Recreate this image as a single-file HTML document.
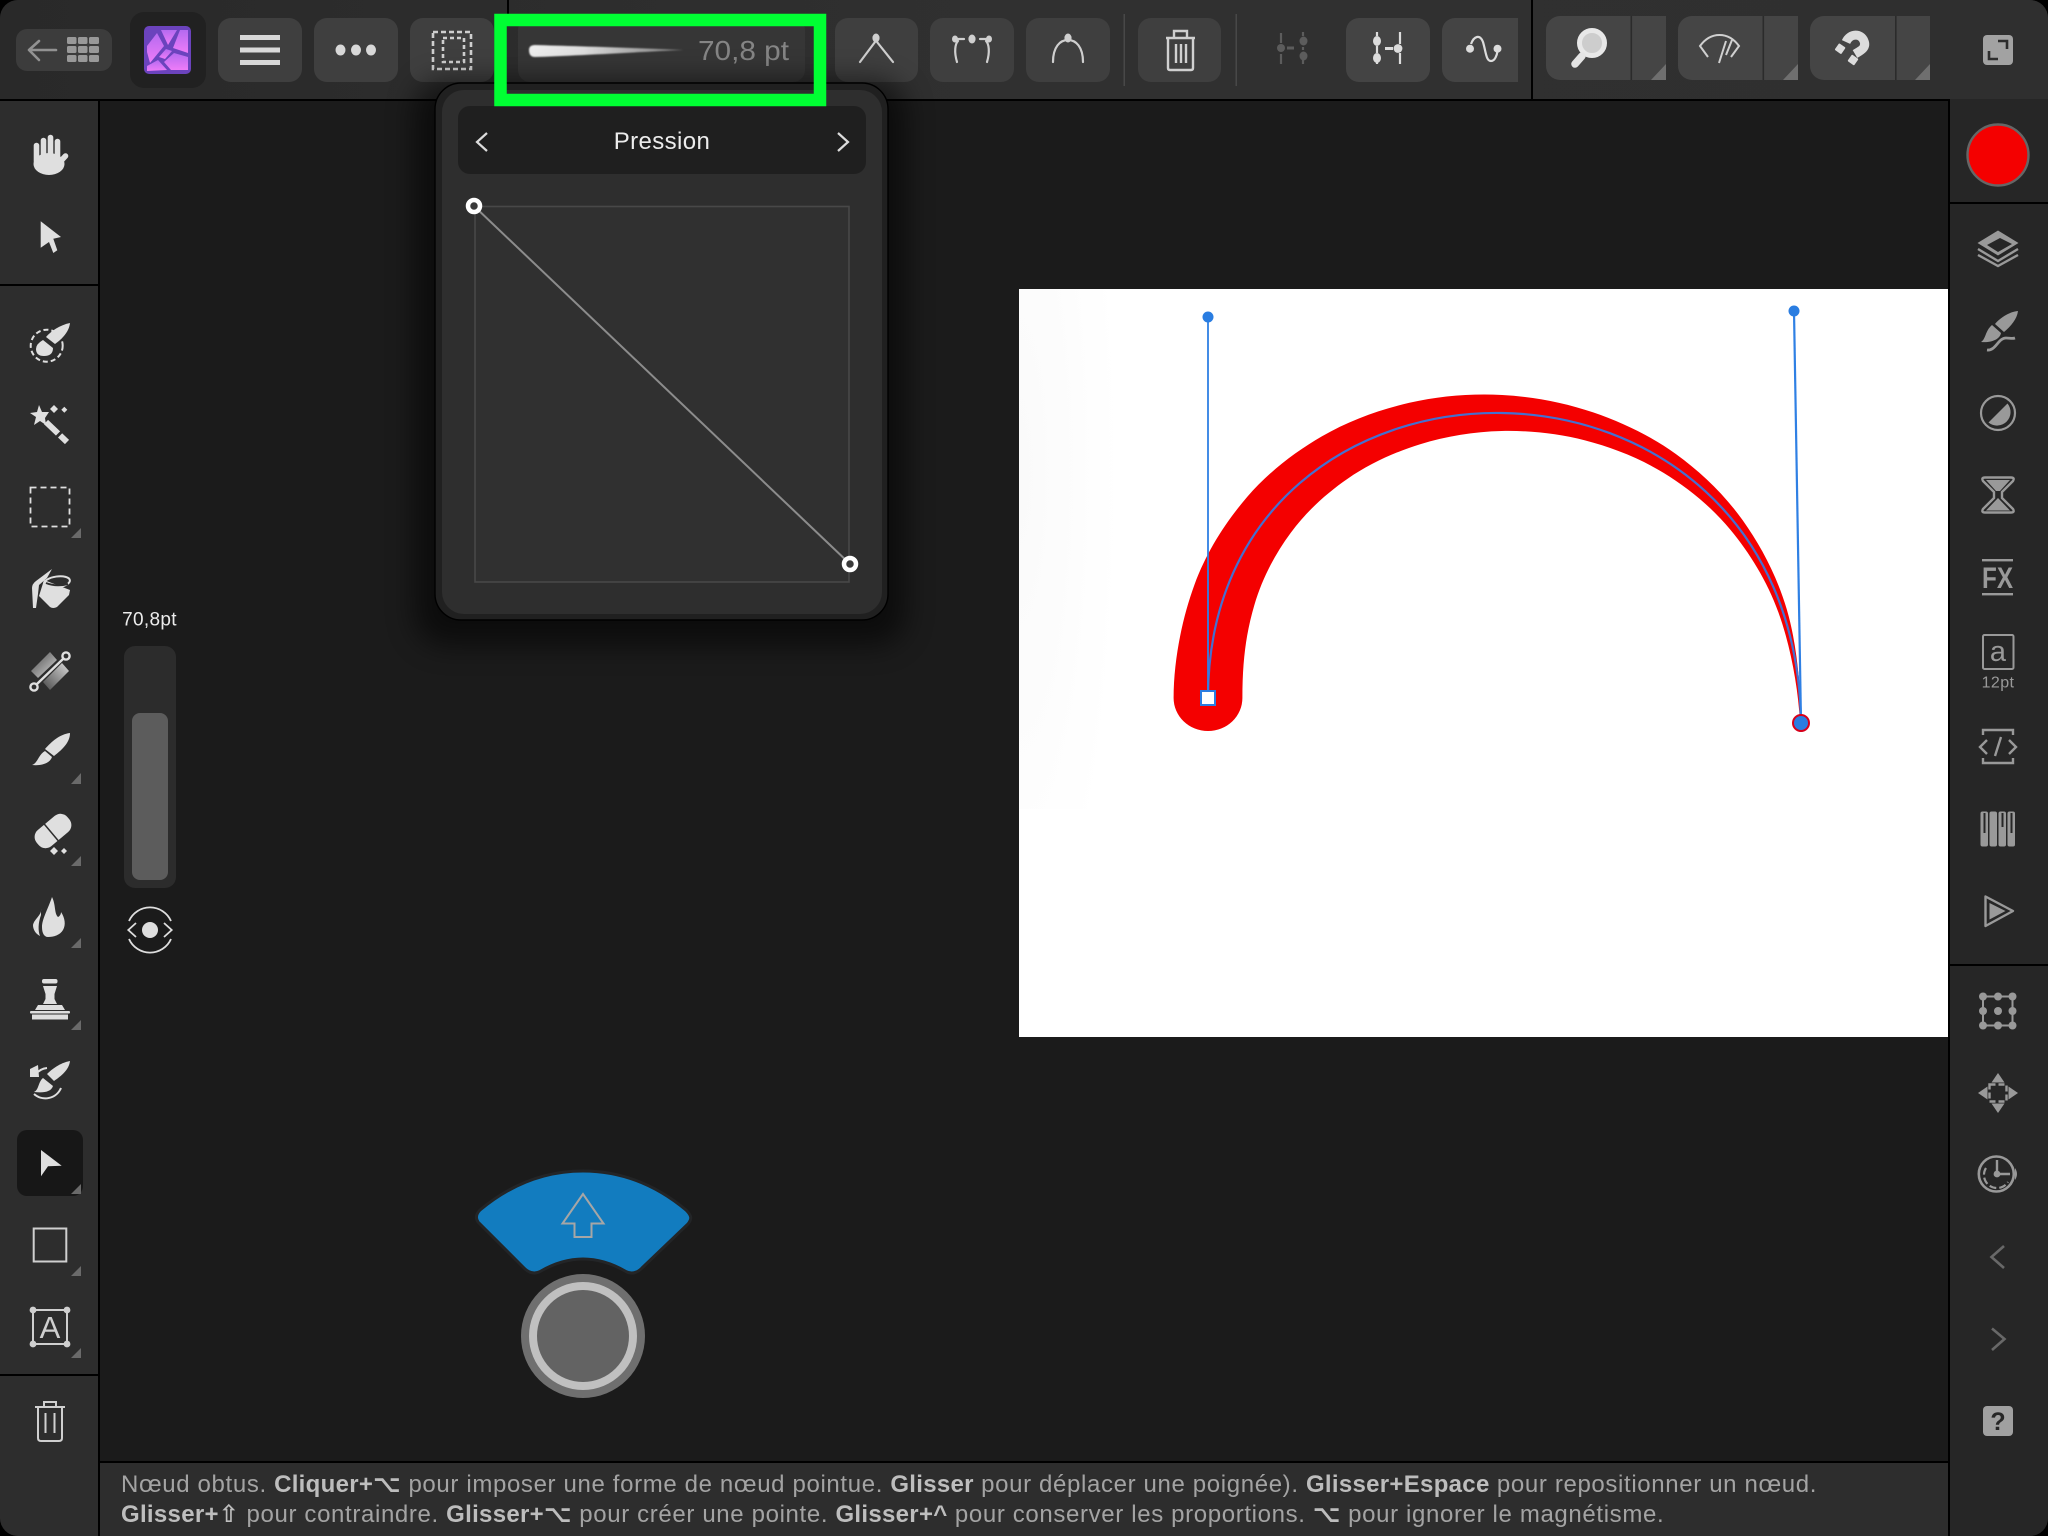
<!DOCTYPE html>
<html lang="fr">
<head>
<meta charset="utf-8">
<title>Affinity Photo</title>
<style>
html,body{margin:0;padding:0;background:#000;width:2048px;height:1536px;overflow:hidden}
svg{display:block;position:absolute;left:0;top:0;border-radius:18px}
text{font-family:"Liberation Sans","DejaVu Sans",sans-serif}
#status{position:absolute;left:121px;top:1470px;width:1810px;font:24px/29.5px "Liberation Sans","DejaVu Sans",sans-serif;color:#a3a3a3;white-space:nowrap;letter-spacing:.64px}
#status b{color:#bdbdbd;font-weight:bold;letter-spacing:.3px}
</style>
</head>
<body>
<svg width="2048" height="1536" viewBox="0 0 2048 1536" xmlns="http://www.w3.org/2000/svg">
<defs>
<linearGradient id="tb" x1="0" x2="1" y1="0" y2="0"><stop offset="0" stop-color="#292929"/><stop offset=".5" stop-color="#303030"/><stop offset="1" stop-color="#2f2f2f"/></linearGradient>
<linearGradient id="logo" x1="0" x2="0" y1="0" y2="1"><stop offset="0" stop-color="#b56af0"/><stop offset="1" stop-color="#ee7cf8"/></linearGradient>
<linearGradient id="stk" x1="0" x2="1" y1="0" y2="0"><stop offset="0" stop-color="#eee"/><stop offset=".35" stop-color="#ddd"/><stop offset="1" stop-color="#777"/></linearGradient>
<linearGradient id="g1" x1="0" x2="1" y1="0" y2="1"><stop offset="0" stop-color="#4a4a4a"/><stop offset="1" stop-color="#d8d8d8"/></linearGradient>
<linearGradient id="g2" x1="0" x2="1" y1="1" y2="0"><stop offset="0" stop-color="#4a4a4a"/><stop offset="1" stop-color="#d8d8d8"/></linearGradient>
<radialGradient id="doc" cx="0" cy=".35" r="1"><stop offset="0" stop-color="#fafafa"/><stop offset="1" stop-color="#fff"/></radialGradient>
<filter id="bl" x="-20%" y="-20%" width="140%" height="140%"><feGaussianBlur stdDeviation="14"/></filter>
<filter id="bl2"><feGaussianBlur stdDeviation=".7"/></filter>
</defs>

<rect width="2048" height="1536" fill="#1b1b1b"/>

<!-- document -->
<rect x="1019" y="289" width="929" height="748" fill="#fff"/>
<rect x="1019" y="289" width="100" height="520" fill="url(#doc)"/>

<!-- stroke -->
<path fill="#f40000" d="M1173.6,698 C1173.6,660 1182.2,618.1 1194.5,584.6 C1206.8,551.1 1226,521.6 1247.2,496.9 C1268.4,472.2 1294.8,452.1 1321.8,436.4 C1348.8,420.7 1379.3,409.7 1409.4,402.8 C1439.5,395.9 1471.6,393.4 1502.2,395 C1532.8,396.6 1564.2,402.5 1593.2,412.4 C1622.2,422.3 1651.1,436.1 1676,454.1 C1700.9,472.1 1724.2,494.3 1742.7,520.3 C1761.2,546.3 1777,576.2 1786.9,609.8 C1796.8,643.4 1800,684 1802,722 L1800,722 C1798,686 1790.1,644.6 1778.5,612.6 C1766.9,580.6 1749.7,553.2 1730.5,529.9 C1711.3,506.6 1687.9,487.8 1663.6,472.9 C1639.3,458 1612,447.4 1585,440.4 C1558,433.4 1529.1,430.4 1501.6,431 C1474.1,431.6 1445.8,436.3 1420.2,444.2 C1394.6,452.1 1369.4,463.8 1347.8,478.6 C1326.2,493.4 1306.4,511.6 1290.8,532.7 C1275.2,553.8 1262.4,577.6 1254.3,605.2 C1246.2,632.8 1242.4,660 1242.4,698 A34.4,33 0 0 1 1173.6,698 Z"/>
<path fill="none" stroke="#4470d0" stroke-width="2.2" d="M1208,698 C1208,317 1794,311 1801,722"/>
<line x1="1208" y1="698" x2="1208" y2="317" stroke="#2f80e4" stroke-width="1.8"/>
<line x1="1794" y1="311" x2="1801" y2="722" stroke="#2f80e4" stroke-width="2.2"/>
<circle cx="1208" cy="317" r="5.5" fill="#2a7de1"/>
<circle cx="1794" cy="311" r="5.5" fill="#2a7de1"/>
<rect x="1201" y="691" width="14" height="14" fill="#fff" stroke="#2a7de1" stroke-width="2"/>
<circle cx="1801" cy="727" r="5" fill="#2a7de1"/>
<circle cx="1801" cy="723" r="8" fill="#2a7de1" stroke="#d8001a" stroke-width="2"/>

<!-- top bar -->
<rect width="2048" height="99" fill="url(#tb)"/>
<rect y="99" width="2048" height="2" fill="#000"/>
<rect x="507" y="0" width="2" height="20" fill="#000"/>
<rect x="1531" y="0" width="2" height="99" fill="#000"/>

<!-- back -->
<rect x="16" y="29" width="96" height="42" rx="11" fill="#3c3c3c"/>
<path d="M56,50 H30 M39,41 L29,50 L39,60" fill="none" stroke="#929292" stroke-width="2.6" stroke-linecap="round" stroke-linejoin="round"/>
<g fill="#999">
<rect x="67" y="37" width="9.5" height="7" rx="1.5"/><rect x="78" y="37" width="9.5" height="7" rx="1.5"/><rect x="89" y="37" width="10" height="7" rx="1.5"/>
<rect x="67" y="46" width="9.5" height="7" rx="1.5"/><rect x="78" y="46" width="9.5" height="7" rx="1.5"/><rect x="89" y="46" width="10" height="7" rx="1.5"/>
<rect x="67" y="55" width="9.5" height="7" rx="1.5"/><rect x="78" y="55" width="9.5" height="7" rx="1.5"/><rect x="89" y="55" width="10" height="7" rx="1.5"/>
</g>

<!-- logo -->
<rect x="130" y="12" width="76" height="76" rx="14" fill="#212121"/>
<rect x="144" y="26" width="47" height="48" rx="5" fill="#6b43bd"/>
<g fill="url(#logo)">
<polygon points="161,30 177,30 168,45"/>
<polygon points="180,30 188,30 188,53 173,48"/>
<polygon points="157,33 164,46 150,63 147,52 147,46"/>
<polygon points="166,49 172,51 165,59 159,57"/>
<polygon points="174,53 188,57 188,70 171,70 164,62"/>
<polygon points="147,66 158,60 167,70 147,71"/>
</g>

<!-- buttons -->
<g fill="#3f3f3f">
<rect x="218" y="18" width="84" height="64" rx="13"/>
<rect x="314" y="18" width="84" height="64" rx="13"/>
<rect x="410" y="18" width="84" height="64" rx="13"/>
<rect x="835" y="18" width="83" height="64" rx="13"/>
<rect x="930" y="18" width="84" height="64" rx="13"/>
<rect x="1026" y="18" width="84" height="64" rx="13"/>
<rect x="1138" y="18" width="83" height="64" rx="13"/>
<rect x="1346" y="18" width="84" height="64" rx="13" fill="#444"/>
<path d="M1455,18 H1518 V82 H1455 A13,13 0 0 1 1442,69 V31 A13,13 0 0 1 1455,18Z" fill="#444"/>
</g>
<g fill="#d8d8d8"><rect x="240" y="35" width="40" height="5"/><rect x="240" y="47.5" width="40" height="5"/><rect x="240" y="60" width="40" height="5"/></g>
<g fill="#d8d8d8"><ellipse cx="340.5" cy="50" rx="5" ry="5.5"/><ellipse cx="356" cy="50" rx="5" ry="5.5"/><ellipse cx="371" cy="50" rx="5" ry="5.5"/></g>
<g fill="none" stroke="#cfcfcf" stroke-width="2.6"><rect x="433" y="32" width="38" height="37" stroke-dasharray="5 3"/><rect x="443" y="38" width="21" height="24" stroke-dasharray="4 3"/></g>

<!-- brush control -->
<rect x="518" y="18" width="287" height="64" rx="12" fill="#363636"/>
<path d="M529,50 Q529,45 535,45 C570,46 640,48 684,50 C640,52 570,56 535,57 Q529,57 529,50Z" fill="url(#stk)" filter="url(#bl2)"/>
<text x="698" y="60" font-size="28" fill="#858585" textLength="91" lengthAdjust="spacingAndGlyphs">70,8 pt</text>

<!-- node type icons -->
<g fill="none" stroke="#cfcfcf" stroke-width="2.2" stroke-linecap="round">
<path d="M875,42 L860,62 M877,42 L893,62"/>
<path d="M957,62 C954,52 955,44 958,41 M987,62 C990,52 989,44 986,41 M957,39 H964 M980,39 H987"/>
<path d="M1053,62 C1053,47 1060,40 1068,40 C1076,40 1083,47 1083,62"/>
</g>
<g fill="#cfcfcf">
<ellipse cx="876" cy="38" rx="3.6" ry="4.5"/>
<ellipse cx="972" cy="39" rx="3.6" ry="4.5"/><ellipse cx="955" cy="39" rx="3" ry="3.5"/><ellipse cx="989" cy="39" rx="3" ry="3.5"/>
<ellipse cx="1068" cy="38" rx="3.6" ry="4.5"/>
</g>

<rect x="1123.5" y="14" width="1.5" height="72" fill="#484848"/>
<rect x="1235.5" y="14" width="1.5" height="72" fill="#484848"/>

<!-- top trash -->
<g fill="none" stroke="#d0d0d0" stroke-width="2.4">
<path d="M1166,38 H1195 M1174,37 V31 H1187 V37"/>
<path d="M1168,38 V68 Q1168,70 1170,70 H1191 Q1193,70 1193,68 V38"/>
<path d="M1176,44 V63 M1181,44 V63 M1186,44 V63"/>
</g>

<!-- sliders faded -->
<g fill="none" stroke="#5c5c5c" stroke-width="2.2">
<path d="M1281,33 V43 M1281,54 V64 M1303,32 V36 M1303,47 V50 M1303,60 V64"/>
<path d="M1287,48 H1294" stroke-width="3"/>
</g>
<g fill="#5c5c5c"><circle cx="1281" cy="48" r="4"/><ellipse cx="1303.5" cy="41" rx="4" ry="4.5"/><ellipse cx="1303.5" cy="56" rx="4" ry="4.5"/></g>
<!-- sliders active -->
<g fill="none" stroke="#dcdcdc" stroke-width="2.2">
<path d="M1377,32 V36 M1377,46 V53 M1377,62 V64 M1400,32 V44 M1400,53 V64"/>
<path d="M1385,48.5 H1393" stroke-width="3"/>
</g>
<g fill="#dcdcdc"><ellipse cx="1377" cy="41" rx="4" ry="5"/><ellipse cx="1377" cy="58" rx="4" ry="5"/><circle cx="1398" cy="48.5" r="4.4"/></g>
<!-- curve -->
<path d="M1471,44 C1474,36 1480,34 1483,42 C1486,52 1486,61 1491,61 C1495,61 1497,55 1497.5,51" fill="none" stroke="#dcdcdc" stroke-width="2.2"/>
<circle cx="1470" cy="48.7" r="4" fill="#dcdcdc"/><circle cx="1497.5" cy="48.7" r="4" fill="#dcdcdc"/>

<!-- split buttons -->
<g>
<path d="M1560,16 H1666 V80 H1560 A14,14 0 0 1 1546,66 V30 A14,14 0 0 1 1560,16Z" fill="#454545"/>
<path d="M1692,16 H1798 V80 H1692 A14,14 0 0 1 1678,66 V30 A14,14 0 0 1 1692,16Z" fill="#454545"/>
<path d="M1824,16 H1930 V80 H1824 A14,14 0 0 1 1810,66 V30 A14,14 0 0 1 1824,16Z" fill="#454545"/>
<rect x="1630.5" y="16" width="1.6" height="64" fill="#2b2b2b"/>
<rect x="1762.5" y="16" width="1.6" height="64" fill="#2b2b2b"/>
<rect x="1895" y="16" width="1.6" height="64" fill="#2b2b2b"/>
<g fill="#6f6f6f"><polygon points="1666,64 1666,80 1651,80"/><polygon points="1798,64 1798,80 1783,80"/><polygon points="1930,64 1930,80 1915,80"/></g>
</g>
<!-- magnifier -->
<circle cx="1592" cy="43" r="12.5" fill="#cdcdcd" stroke="#e8e8e8" stroke-width="5"/>
<path d="M1582,56 L1575,64" stroke="#e4e4e4" stroke-width="7.5" stroke-linecap="round"/>
<!-- wiper -->
<path d="M1708,57 L1700,46 Q1708,35 1719.5,35 Q1731,35 1739,46 L1731,57" fill="none" stroke="#d0d0d0" stroke-width="2"/>
<path d="M1719,63 L1726,41 M1726,55 L1732,40" fill="none" stroke="#d0d0d0" stroke-width="2"/>
<!-- magnet -->
<path d="M1846,42 C1850,33 1861,33 1864,41 C1867,48 1860,51 1855,54" fill="none" stroke="#dcdcdc" stroke-width="9"/>
<rect x="1836.5" y="44.5" width="8" height="8" rx="1" transform="rotate(35 1840 48)" fill="#dcdcdc"/>
<rect x="1849" y="56" width="8" height="8" rx="1" transform="rotate(35 1853 60)" fill="#dcdcdc"/>
<!-- expand -->
<rect x="1983" y="35" width="30" height="30" rx="4" fill="#a2a2a2"/>
<path d="M1998,41 H2007 V49 M1989,51 V59 H1998" fill="none" stroke="#2d2d2d" stroke-width="2.6"/>

<!-- left panel -->
<rect x="0" y="101" width="98" height="1435" fill="#2d2d2d"/>
<rect x="98" y="99" width="2" height="1437" fill="#000"/>
<rect x="0" y="284" width="98" height="2" fill="#000"/>
<rect x="0" y="1374" width="98" height="2" fill="#000"/>

<g fill="#dfdfdf" stroke="none">
<!-- hand -->
<g transform="translate(50,155)">
<g stroke="#dfdfdf" stroke-width="5.6" stroke-linecap="round" fill="none"><path d="M-13.5,6 V-9.5"/><path d="M-6.5,4 V-14.5"/><path d="M0.500,4 V-17.5"/><path d="M7.500,4 V-13.500"/><path d="M9,8 L15.500,1"/></g>
<ellipse cx="-1" cy="9" rx="15.500" ry="11"/>
</g>
<!-- arrow -->
<polygon transform="translate(50,237)" points="-9.3,-15.7 11,0 3.3,1.7 7.3,13.3 3.3,16 -1,5 -9.3,10.7"/>
<!-- selection brush -->
<g transform="translate(50,343)">
<circle cx="-3.3" cy="2.7" r="16" fill="none" stroke="#dfdfdf" stroke-width="2" stroke-dasharray="5 3"/>
<path d="M20,-20 C10,-18 1,-12 -4,-6 L5,1 C12,-4 19,-11 20,-20Z"/>
<path d="M-7,-3 L3,5 Q3,13 -6,13 Q-14,13 -14,6 Q-14,1 -7,-3Z"/>
</g>
<!-- wand -->
<g transform="translate(50,425)">
<polygon points="-11,-20 -8,-13 -1,-13 -5,-7 -4,-0 -10,-4 -16,0 -14,-8 -20,-12 -13,-13"/>
<polygon points="4,-20 8,-16 4,-12 0,-16"/><polygon points="14.3,-18.3 17.3,-15.3 14.3,-12.3 11.3,-15.3"/>
<path d="M-4,-3 L17,17" stroke="#dfdfdf" stroke-width="6"/>
<path d="M8,8.5 L10,10.500" stroke="#2d2d2d" stroke-width="8"/>
</g>
<!-- marquee -->
<rect x="30.5" y="487.500" width="39" height="39" fill="none" stroke="#dfdfdf" stroke-width="1.8" stroke-dasharray="6 4"/>
<!-- fill -->
<g transform="translate(50,588)">
<path d="M2,-19 L-14,-7 Q-18,-4 -18,0 L-17,20 L-14,20 L-12,6 L-11,-3 L-3,-10 Z"/>
<path d="M-6,-8 L20,2 L19,7 L7,19 Q3,21 0,19 L-11,8 Z"/>
<ellipse cx="7" cy="-6" rx="13" ry="5.500" transform="rotate(-8 7 -6)" fill="none" stroke="#dfdfdf" stroke-width="2"/>
<path d="M-4,-5 Q6,-1 18,-4" fill="none" stroke="#2d2d2d" stroke-width="2"/>
</g>
<!-- gradient -->
<g transform="translate(50,671)">
<polygon points="-19,0 0,-19 7,-11 -12,7" fill="url(#g1)"/>
<polygon points="-7,11 12,-8 19,0 0,19" fill="url(#g2)"/>
<path d="M-13,13 L13,-12" stroke="#dfdfdf" stroke-width="2.400"/>
<circle cx="-16" cy="16" r="3.600" fill="#2d2d2d" stroke="#dfdfdf" stroke-width="2.400"/>
<circle cx="16" cy="-15" r="3.600" fill="#2d2d2d" stroke="#dfdfdf" stroke-width="2.400"/>
</g>
<!-- brush -->
<g transform="translate(50,750)">
<path d="M20,-17 C10,-16 1,-8 -5,-1 L4,6 C13,-1 20,-8 20,-17Z"/>
<path d="M-5,1 L2,7 C0,13 -8,16 -18,15 C-12,13 -12,5 -5,1Z"/>
</g>
<!-- heal -->
<g transform="translate(50,832)">
<g transform="translate(3,-1) rotate(-40)"><rect x="-20" y="-10.500" width="40" height="21" rx="9"/><rect x="-3" y="-11" width="1.500" height="22" fill="#2d2d2d"/></g>
<polygon points="4,15 8,19 4,23 0,19"/><polygon points="14,16 17,19 14,22 11,19"/>
</g>
<!-- burn -->
<g transform="translate(50,917)">
<path d="M2,-20 C6,-12 4,-4 8,0 C10,-1 11,-3 11,-5 C15,1 16,8 13,13 C10,18 4,20 -2,20 C-6,20 -8,16 -8,10 C-8,2 -2,-8 2,-20Z"/>
<path d="M-9,-8 C-8,-2 -16,2 -17,8 C-17,13 -14,17 -10,19 C-12,14 -12,6 -9,-2Z"/>
</g>
<!-- stamp -->
<g transform="translate(50,999)">
<rect x="-8" y="-20" width="15.500" height="4.500" rx="2"/>
<path d="M-7,-13 H7 L4.500,-5 L4.500,0 L7,5 H-7 L-4.500,0 L-4.500,-5Z"/>
<path d="M-12,6 H12 L15,11 H-15Z"/>
<rect x="-20" y="12" width="40" height="2.500" rx="1"/>
<rect x="-18" y="15.500" width="36" height="5"/>
</g>
<!-- undo brush -->
<g transform="translate(50,1080)">
<path d="M20,-19 C10,-17 2,-11 -3,-6 L4,1 C11,-4 19,-10 20,-19Z"/>
<path d="M-7,-2 L3,6 C1,12 -6,13 -16,12 C-11,10 -12,2 -7,-2Z"/>
<path d="M-14,-6 A16,16 0 0 1 -3,-12 M11,8 A17,17 0 0 1 -16,14" fill="none" stroke="#dfdfdf" stroke-width="2"/>
<polygon points="-20,-11 -12,-15 -11,-3 -20,-3"/>
</g>
</g>

<!-- selected tool -->
<rect x="17" y="1130" width="66" height="66" rx="10" fill="#171717"/>
<polygon transform="translate(50,1163)" points="-9,-13 11.700,2.700 -2,3.300 -9,13.300" fill="#dfdfdf"/>
<rect x="33.700" y="1228.500" width="32.600" height="33" fill="none" stroke="#cfcfcf" stroke-width="2"/>
<g>
<rect x="33" y="1310" width="34" height="34" fill="none" stroke="#cfcfcf" stroke-width="2"/>
<g fill="#cfcfcf"><circle cx="33" cy="1310" r="3.400"/><circle cx="67" cy="1310" r="3.400"/><circle cx="33" cy="1344" r="3.400"/><circle cx="67" cy="1344" r="3.400"/></g>
<text x="50" y="1338" font-size="31" fill="#cfcfcf" text-anchor="middle">A</text>
</g>
<!-- left trash -->
<g fill="none" stroke="#cfcfcf" stroke-width="2">
<path d="M35,1407 H65 M44,1406 V1402 H56 V1406"/>
<path d="M38,1407 V1438 Q38,1441 41,1441 H59 Q62,1441 62,1438 V1407"/>
<path d="M45.500,1413 V1433 M54.500,1413 V1433"/>
</g>
<!-- corner triangles -->
<g fill="#6a6a6a">
<polygon points="81,528 81,538 71,538"/>
<polygon points="81,773 81,784 71,784"/>
<polygon points="81,856 81,866 71,866"/>
<polygon points="81,938 81,948 71,948"/>
<polygon points="81,1020 81,1030 71,1030"/>
<polygon points="81,1184 81,1194 71,1194"/>
<polygon points="81,1266 81,1276 71,1276"/>
<polygon points="81,1348 81,1358 71,1358"/>
</g>

<!-- size slider -->
<text x="149.500" y="625.500" font-size="19" letter-spacing=".3" fill="#ececec" text-anchor="middle">70,8pt</text>
<rect x="124" y="646" width="52" height="242" rx="11" fill="#2c2c2c"/>
<rect x="132" y="713" width="36" height="167" rx="8" fill="#5c5c5c"/>
<g transform="translate(150,930)" fill="none" stroke="#dedede" stroke-width="1.800">
<circle r="8" fill="#dedede" stroke="none"/>
<path d="M-21,-9 A23,23 0 0 1 21,-9 M-21,9 A23,23 0 0 0 21,9 M-14,-7 L-21.700,0 L-14,7 M14,-7 L21.700,0 L14,7"/>
</g>

<!-- popup -->
<rect x="415" y="80" width="490" height="565" rx="30" fill="#000" opacity=".55" filter="url(#bl)"/>
<rect x="435" y="83" width="453" height="537" rx="26" fill="#202020" stroke="#000" stroke-width="1.400"/>
<rect x="442" y="90" width="440" height="524" rx="22" fill="#2e2e2e"/>
<rect x="458" y="106" width="408" height="68" rx="12" fill="#1f1f1f"/>
<text x="662" y="149" font-size="24" letter-spacing=".4" fill="#ececec" text-anchor="middle">Pression</text>
<path d="M487,133 L477,142 L487,151 M838,133 L848,142 L838,151" fill="none" stroke="#dcdcdc" stroke-width="2.200"/>
<rect x="475" y="206.500" width="374" height="375.500" fill="#303030" stroke="#484848" stroke-width="1.600"/>
<line x1="474" y1="206" x2="850" y2="564" stroke="#8c8c8c" stroke-width="2"/>
<circle cx="474" cy="206" r="6" fill="#3a3a3a" stroke="#fff" stroke-width="4.500"/>
<circle cx="850" cy="564" r="6" fill="#3a3a3a" stroke="#fff" stroke-width="4.500"/>

<!-- green highlight -->
<rect x="500.500" y="20" width="319.500" height="80" fill="none" stroke="#00ff33" stroke-width="12.500"/>

<!-- joystick -->
<path d="M478,1222 Q474,1216 480,1210 C510,1185 545,1171 583,1171 C621,1171 656,1185 686,1210 C692,1216 692,1219 688,1224 L642,1268 C636,1274 630,1274 625,1271 C611,1263 598,1259 583,1259 C568,1259 555,1263 541,1271 C536,1274 530,1274 524,1268 Z" fill="#127cbf" stroke="#232527" stroke-width="3"/>
<path d="M583,1194 L562.500,1223.500 H574.500 V1237 H591.500 V1223.500 H603.500 Z" fill="none" stroke="#a6a6a6" stroke-width="2"/>
<circle cx="583" cy="1336" r="62" fill="#6f6f6f"/>
<circle cx="583" cy="1336" r="54" fill="#c0c0c0"/>
<circle cx="583" cy="1336" r="46" fill="#636363"/>

<!-- right panel -->
<rect x="1950" y="99" width="98" height="1437" fill="#262626"/>
<rect x="1948" y="99" width="2" height="1437" fill="#000"/>
<rect x="1950" y="202" width="98" height="2" fill="#000"/>
<rect x="1950" y="964" width="98" height="2" fill="#000"/>
<circle cx="1998" cy="155" r="30.500" fill="#f40000" stroke="#666" stroke-width="2.400"/>

<g fill="#999" stroke="none">
<!-- layers -->
<g transform="translate(1998,248)">
<polygon points="0,-17.500 20.500,-5 0,7.500 -20.500,-5"/>
<polygon points="2,-10 14,-4 0,4 -11,-3" fill="#262626"/>
<path d="M-20,1 L0,13 L20,1 M-20,7 L0,18 L20,7" fill="none" stroke="#999" stroke-width="2.400"/>
</g>
<!-- brush 2 -->
<g transform="translate(1998,330)">
<path d="M20,-19 C10,-18 1,-11 -3,-6 L6,2 C13,-4 19,-11 20,-19Z"/>
<path d="M-6,-5 L3,3 C2,9 -6,13 -17,12 C-12,9 -13,1 -6,-5Z"/>
<path d="M-11,20 C-2,21 0,8 8,8 C12,8 14,9 17,8" fill="none" stroke="#999" stroke-width="2.800"/>
</g>
<!-- adjustment -->
<g transform="translate(1998,413)">
<circle r="17" fill="none" stroke="#999" stroke-width="2.200"/>
<path d="M9.500,-9.500 A13.500,13.500 0 0 1 -9.500,9.500Z"/>
</g>
<!-- hourglass -->
<g transform="translate(1998,495)">
<path d="M-13,-17.500 H13 Q17,-17.500 15,-14 L4,-3 V3 L15,14 Q17,17.500 13,17.500 H-13 Q-17,17.500 -15,14 L-4,3 V-3 L-15,-14 Q-17,-17.500 -13,-17.500Z" fill="none" stroke="#999" stroke-width="2.400"/>
<polygon points="-12,-15 12,-15 2,-4 -2,-4"/>
<polygon points="0,3 12,15.500 -12,15.500"/>
</g>
<!-- FX -->
<rect x="1982" y="559" width="31" height="2.400"/>
<rect x="1982" y="593" width="31" height="2.400"/>
<text x="1982" y="588" font-size="30" font-weight="bold" textLength="31" lengthAdjust="spacingAndGlyphs">FX</text>
<!-- a box -->
<rect x="1983" y="635" width="30.500" height="34" rx="1.500" fill="none" stroke="#999" stroke-width="2"/>
<text x="1998" y="661" font-size="29" text-anchor="middle">a</text>
<text x="1998" y="687.500" font-size="16" text-anchor="middle" letter-spacing=".4">12pt</text>
<!-- code -->
<g transform="translate(1998,747)" fill="none" stroke="#999" stroke-width="2.400">
<path d="M-15,-12 V-17 H15 V-12 M-15,11 V16 H15 V11"/>
<path d="M-11,-7 L-18,0 L-11,7 M11,-7 L18,0 L11,7 M3,-10 L-3,9"/>
</g>
<!-- piano -->
<g transform="translate(1998,829)">
<rect x="-17.500" y="-17.500" width="7.500" height="35" rx="2"/><rect x="-8.500" y="-17.500" width="7.500" height="35" rx="2"/><rect x="0.500" y="-17.500" width="7.500" height="35" rx="2"/><rect x="9.500" y="-17.500" width="7.500" height="35" rx="2"/>
<g fill="#262626"><rect x="-14.500" y="-16" width="2" height="20"/><rect x="3.500" y="-16" width="2" height="14"/><rect x="12.500" y="-16" width="2" height="20"/></g>
</g>
<!-- play -->
<g transform="translate(1998,911)">
<polygon points="-12.500,-14.500 15,0 -12.500,15" fill="none" stroke="#999" stroke-width="2.400" stroke-linejoin="round"/>
<polygon points="-8.500,-8 7.500,0 -8.500,8.500"/>
</g>
<!-- transform -->
<g transform="translate(1998,1011)">
<rect x="-15" y="-14.500" width="29.500" height="29" fill="none" stroke="#999" stroke-width="2"/>
<g><circle cx="-15" cy="-14.500" r="4"/><circle cx="0" cy="-14.500" r="4"/><circle cx="14.500" cy="-14.500" r="4"/><circle cx="-15" cy="0" r="4"/><circle cx="0" cy="0" r="4"/><circle cx="14.500" cy="0" r="4"/><circle cx="-15" cy="14.500" r="4"/><circle cx="0" cy="14.500" r="4"/><circle cx="14.500" cy="14.500" r="4"/></g>
</g>
<!-- move -->
<g transform="translate(1998,1093)">
<polygon points="0,-20 6.500,-10.500 -6.500,-10.500"/><polygon points="0,20 6.500,10.500 -6.500,10.500"/><polygon points="-20,0 -10.500,-6.500 -10.500,6.500"/><polygon points="20,0 10.500,-6.500 10.500,6.500"/>
<rect x="-8.500" y="-8.500" width="17" height="17" fill="none" stroke="#999" stroke-width="2.400" stroke-dasharray="6 3"/>
</g>
<!-- clock -->
<g transform="translate(1998,1174)">
<circle cx="-1.700" cy="0" r="17.500" fill="none" stroke="#999" stroke-width="2.600"/>
<path d="M17,-6 Q21,0 17,6 Z"/>
<circle cx="-1" cy="0" r="3.400"/>
<path d="M-1,0 V-14 M-1,0 H12" fill="none" stroke="#999" stroke-width="2.400"/>
<path d="M-12,-6 A12.500,12.500 0 0 0 10,8" fill="none" stroke="#999" stroke-width="2.200" stroke-dasharray="7 3"/>
</g>
<!-- chevrons -->
<path d="M2004,1246 L1991.500,1257 L2004,1268 M1992,1328.500 L2004.500,1339 L1992,1350" fill="none" stroke="#686868" stroke-width="2.600"/>
<!-- help -->
<rect x="1983" y="1406" width="30" height="30" rx="4" fill="#a0a0a0"/>
<text x="1998" y="1430" font-size="25" font-weight="bold" text-anchor="middle" fill="#262626">?</text>
</g>

<!-- status bar -->
<rect x="100" y="1462" width="1848" height="74" fill="#2d2d2d"/>
<rect x="100" y="1461" width="1848" height="2" fill="#000"/>
</svg>
<div id="status">Nœud obtus. <b>Cliquer+⌥</b> pour imposer une forme de nœud pointue. <b>Glisser</b> pour déplacer une poignée). <b>Glisser+Espace</b> pour repositionner un nœud.<br><b>Glisser+⇧</b> pour contraindre. <b>Glisser+⌥</b> pour créer une pointe. <b>Glisser+^</b> pour conserver les proportions. <b>⌥</b> pour ignorer le magnétisme.</div>
</body>
</html>
